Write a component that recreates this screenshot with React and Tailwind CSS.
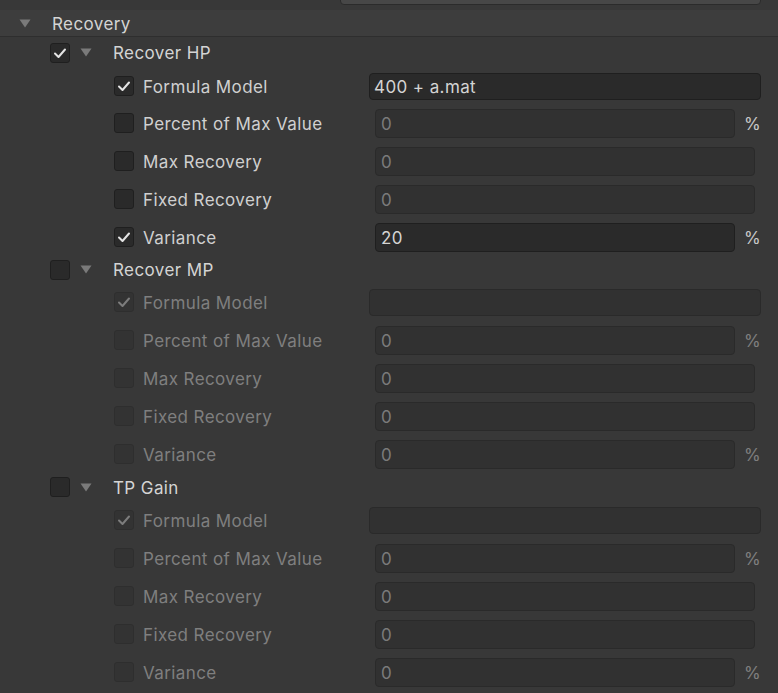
import React from "react";

const groups = [
  {
    name: "Recover HP",
    enabled: true,
    headH: "h-[31px]",
    firstH: "h-[36px]",
    fields: [
      { label: "Formula Model", kind: "formula", on: true, value: "400 + a.mat" },
      { label: "Percent of Max Value", kind: "percent", on: false, value: "0" },
      { label: "Max Recovery", kind: "plain", on: false, value: "0" },
      { label: "Fixed Recovery", kind: "plain", on: false, value: "0" },
      { label: "Variance", kind: "percent", on: true, value: "20" },
    ],
  },
  {
    name: "Recover MP",
    enabled: false,
    headH: "h-[27px]",
    firstH: "h-[38px]",
    fields: [
      { label: "Formula Model", kind: "formula", on: true, value: "" },
      { label: "Percent of Max Value", kind: "percent", on: false, value: "0" },
      { label: "Max Recovery", kind: "plain", on: false, value: "0" },
      { label: "Fixed Recovery", kind: "plain", on: false, value: "0" },
      { label: "Variance", kind: "percent", on: false, value: "0" },
    ],
  },
  {
    name: "TP Gain",
    enabled: false,
    headH: "h-[28px]",
    firstH: "h-[38px]",
    fields: [
      { label: "Formula Model", kind: "formula", on: true, value: "" },
      { label: "Percent of Max Value", kind: "percent", on: false, value: "0" },
      { label: "Max Recovery", kind: "plain", on: false, value: "0" },
      { label: "Fixed Recovery", kind: "plain", on: false, value: "0" },
      { label: "Variance", kind: "percent", on: false, value: "0" },
    ],
  },
];

function Triangle() {
  return (
    <svg width="12" height="9" viewBox="0 0 12 9" className="shrink-0">
      <polygon points="0.5,0.5 11.5,0.5 6,8.5" fill="#7a7a7a" />
    </svg>
  );
}

function Checkbox({ checked, dim }) {
  return (
    <div
      className={
        "w-5 h-5 shrink-0 rounded-[3px] border flex items-center justify-center " +
        (dim ? "bg-[#333333] border-[#2e2e2e]" : "bg-[#2a2a2a] border-[#1f1f1f]")
      }
    >
      {checked && (
        <svg width="14" height="12" viewBox="0 0 14 12">
          <polyline
            points="2,6.5 5.5,10 12,2.5"
            fill="none"
            stroke={dim ? "#7c7c7c" : "#e4e4e4"}
            strokeWidth="2"
            strokeLinecap="round"
            strokeLinejoin="round"
          />
        </svg>
      )}
    </div>
  );
}

function Field({ f, groupOn, h }) {
  const active = groupOn && f.on;
  const labelColor = groupOn ? "text-[#d0d0d0]" : "text-[#7f7f7f]";
  const box = active
    ? "bg-[#2a2a2a] border-[#1f1f1f] text-[#d4d4d4]"
    : "bg-[#313131] border-[#2a2a2a] text-[#7b7b7b]";
  return (
    <div className={"flex items-center pl-[114px] " + h}>
      <Checkbox checked={f.on} dim={!groupOn} />
      <span className={"ml-[9px] w-[226px] pt-[2px] " + labelColor}>{f.label}</span>
      <div className="flex items-center w-[392px]">
        {f.kind === "formula" && (
          <div className={"w-full h-[27px] rounded-[4px] border px-[4px] pt-[2px] flex items-center " + box}>
            {f.value}
          </div>
        )}
        {f.kind === "plain" && (
          <div className={"ml-[6px] w-[380px] h-[29px] rounded-[4px] border px-[5px] pt-[2px] flex items-center " + box}>
            {f.value}
          </div>
        )}
        {f.kind === "percent" && (
          <>
            <div className={"ml-[6px] w-[360px] h-[29px] rounded-[4px] border px-[5px] pt-[2px] flex items-center " + box}>
              {f.value}
            </div>
            <span className={"ml-[9px] pt-[2px] " + (groupOn ? "text-[#c8c8c8]" : "text-[#7f7f7f]")}>%</span>
          </>
        )}
      </div>
    </div>
  );
}

export default function App() {
  return (
    <div
      className="w-[778px] h-[693px] overflow-hidden bg-[#383838] text-[17px] leading-none tracking-[0.4px]"
      style={{ fontFamily: "Inter, 'Noto Sans', sans-serif" }}
    >
      <div className="h-[10px] relative">
        <div className="absolute left-[340px] w-[421px] top-[-10px] h-[15px] rounded-[4px] bg-[#474747] border border-[#2b2b2b]" />
      </div>
      <div className="h-[27px] bg-[#3d3d3d] flex items-center pl-[19px] border-b border-[#2e2e2e]">
        <Triangle />
        <span className="ml-[21px] pt-[2px] text-[#d4d4d4]">Recovery</span>
      </div>
      {groups.map((g) => (
        <div key={g.name}>
          <div className={"flex items-center pl-[50px] " + g.headH}>
            <Checkbox checked={g.enabled} />
            <span className="ml-[10px]">
              <Triangle />
            </span>
            <span className="ml-[21px] pt-[2px] text-[#d4d4d4]">{g.name}</span>
          </div>
          {g.fields.map((f, i) => (
            <Field key={f.label} f={f} groupOn={g.enabled} h={i === 0 ? g.firstH : "h-[38px]"} />
          ))}
        </div>
      ))}
    </div>
  );
}
